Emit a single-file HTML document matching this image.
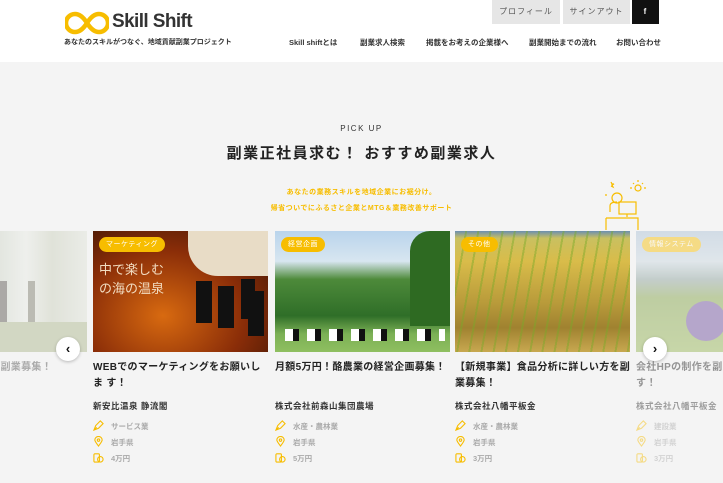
<!DOCTYPE html>
<html><head><meta charset="utf-8"><style>
*{margin:0;padding:0;box-sizing:border-box}
html,body{overflow:hidden}
body{width:723px;height:483px;background:#f4f4f4;font-family:"Liberation Sans","Noto Sans CJK JP",sans-serif;position:relative;color:#222}
.hdr{position:absolute;left:0;top:0;width:723px;height:62px;background:#fff}
.abs{position:absolute;white-space:nowrap}
.btn{position:absolute;top:0;height:24px;background:#e6e6e6;font-size:8px;color:#555;text-align:center;line-height:24px;letter-spacing:1px}
.nav{position:absolute;top:37px;font-size:7.5px;font-weight:bold;color:#333;white-space:nowrap}
.card{position:absolute;top:231px;width:175px;height:250px;overflow:hidden}
.img{height:121px;position:relative;overflow:hidden}
.tag{position:absolute;left:6px;top:6px;height:15px;padding:0 7px;border-radius:8px;background:#f7bd00;color:#fff;font-size:7px;line-height:15px;letter-spacing:.5px}
.t{position:absolute;top:129px;left:0;width:176px;font-size:10px;font-weight:bold;line-height:16px;letter-spacing:.3px;color:#222}
.co{position:absolute;top:169px;font-size:8.5px;font-weight:bold;color:#333;letter-spacing:.5px;white-space:nowrap}
.m{position:absolute;left:18px;font-size:7.5px;color:#aaa;font-weight:bold;white-space:nowrap}
.ic{position:absolute;left:0;width:11px;height:11px}
.fade{opacity:.45}
.arrow{position:absolute;top:337px;width:24px;height:24px;border-radius:12px;background:#fff;box-shadow:0 1px 3px rgba(0,0,0,.25);font-size:13px;line-height:23px;text-align:center;color:#111;font-weight:bold}
</style></head><body>
<div class="hdr"></div>
<svg class="abs" style="left:65px;top:11px" width="44" height="24" viewBox="0 0 44 24"><path d="M22 12C17 4 13 3 10 3a9 9 0 0 0 0 18c3 0 7-1 12-9c5-8 9-9 12-9a9 9 0 0 1 0 18c-3 0-7-1-12-9z" fill="none" stroke="#f7bd00" stroke-width="4.5"/></svg>
<div class="abs" style="left:112px;top:11px;font-size:19px;font-weight:bold;color:#333;letter-spacing:-.6px">Skill Shift</div>
<div class="abs" style="left:64px;top:37px;font-size:7px;color:#333;font-weight:bold">あなたのスキルがつなぐ、地域貢献副業プロジェクト</div>
<div class="btn" style="left:492px;width:68px">プロフィール</div>
<div class="btn" style="left:563px;width:67px">サインアウト</div>
<div class="btn" style="left:632px;width:27px;background:#111;color:#fff;font-weight:bold">f</div>
<div class="nav" style="left:289px">Skill shiftとは</div>
<div class="nav" style="left:360px">副業求人検索</div>
<div class="nav" style="left:426px">掲載をお考えの企業様へ</div>
<div class="nav" style="left:529px">副業開始までの流れ</div>
<div class="nav" style="left:616px">お問い合わせ</div>

<div class="abs" style="left:0;width:723px;top:124px;text-align:center;font-size:8px;letter-spacing:1.5px;color:#333">PICK UP</div>
<div class="abs" style="left:0;width:723px;top:142px;text-align:center;font-size:15px;font-weight:bold;letter-spacing:1.5px;color:#222">副業正社員求む！ おすすめ副業求人</div>
<div class="abs" style="left:0;width:723px;top:185px;text-align:center;font-size:7px;color:#f7bd00;font-weight:bold;letter-spacing:.5px;line-height:16px">あなたの業務スキルを地域企業にお裾分け。<br>帰省ついでにふるさと企業とMTG＆業務改善サポート</div>
<svg class="abs" style="left:600px;top:178px" width="50" height="52" viewBox="0 0 50 52" fill="none" stroke="#f7bd00" stroke-width="1.2"><circle cx="17" cy="20" r="5"/><path d="M10 34v-6c0-3 3-4 7-4"/><rect x="19" y="24" width="17" height="12"/><path d="M27 36v3M6 40h32v12M6 40v12"/><circle cx="38" cy="10" r="3"/><path d="M38 4v-2M44 10h2M32 10h-2M42 6l1-1M34 6l-1-1"/><path d="M11 4l1 2 2 0-2 1 1 2-2-1M5 17h2"/></svg>

<div class="card fade" style="left:0;width:87px">
 <div class="img" style="background:linear-gradient(90deg,#cfd6c8,#e8ebe4 30%,#c9ceb9 60%,#dfe3d8);"><div style="position:absolute;left:0;top:50px;width:70px;height:45px;background:linear-gradient(90deg,#55504a 0 10%,transparent 10% 40%,#776 40% 50%,transparent 50%)"></div><div style="position:absolute;bottom:0;left:0;right:0;height:30px;background:#a9b48a"></div></div>
 <div class="t" style="width:87px;left:0;white-space:nowrap;color:#555"><span style="position:absolute;right:35px">を副業募集！</span></div>
</div>
<div class="card" style="left:93px">
 <div class="img" style="background:radial-gradient(ellipse at 40% 70%,#d86a10,#8a2d08 55%,#3a1505)"><div style="position:absolute;right:0;top:0;width:80px;height:45px;background:#e8dcc6;border-bottom-left-radius:30px"></div><div style="position:absolute;left:103px;top:50px;width:16px;height:42px;background:#111"></div><div style="position:absolute;left:125px;top:55px;width:16px;height:42px;background:#111"></div><div style="position:absolute;left:148px;top:48px;width:14px;height:40px;background:#111"></div><div style="position:absolute;left:155px;top:60px;width:16px;height:45px;background:#111"></div><div style="position:absolute;left:6px;top:28px;color:#f2dcc0;font-size:13px">中で楽しむ<br>の海の温泉</div><span class="tag">マーケティング</span></div>
 <div class="t">WEBでのマーケティングをお願いしま す！</div>
 <div class="co">新安比温泉 静流閣</div>
</div>
<div class="card" style="left:275px">
 <div class="img" style="background:linear-gradient(180deg,#b9d4ec 0,#d8e6f0 25%,#4d8a3a 40%,#2f6e28 70%,#7bb055 85%,#8fbf60)"><div style="position:absolute;right:0;top:0;width:40px;height:95px;background:#2e6a22;border-radius:20px 0 0 0"></div><div style="position:absolute;left:10px;top:98px;width:160px;height:12px;background:repeating-linear-gradient(90deg,#fff 0 8px,#111 8px 14px,transparent 14px 22px)"></div><span class="tag">経営企画</span></div>
 <div class="t">月額5万円！酪農業の経営企画募集！</div>
 <div class="co">株式会社前森山集団農場</div>
</div>
<div class="card" style="left:455px">
 <div class="img" style="background:linear-gradient(180deg,#6c8fb0 0,#c9c060 6%,#d9bc4a 25%,#b89a3a 60%,#a08230 80%,#c8a850)"><div style="position:absolute;inset:0;background:repeating-linear-gradient(100deg,transparent 0 10px,rgba(120,170,40,.45) 10px 12px)"></div><span class="tag">その他</span></div>
 <div class="t">【新規事業】食品分析に詳しい方を副業募集！</div>
 <div class="co">株式会社八幡平板金</div>
</div>
<div class="card fade" style="left:636px;width:87px">
 <div class="img" style="background:linear-gradient(180deg,#a9c0d6,#c8d6e0 25%,#8aa09a 40%,#7ea040 55%,#92b34e)"><div style="position:absolute;left:50px;top:70px;width:40px;height:40px;border-radius:20px;background:#6a4a9a"></div><span class="tag">情報システム</span></div>
 <div class="t" style="white-space:nowrap">会社HPの制作を副業募集します！</div>
 <div class="t" style="top:145px">す！</div>
 <div class="co">株式会社八幡平板金</div>
</div>

<div style="position:absolute;left:93px;top:0">
 <svg class="ic abs" style="top:420px" viewBox="0 0 12 12" fill="none" stroke="#f7bd00" stroke-width="1.2"><path d="M1 11l2-5 5-5 3 3-5 5z M1 11l3-3"/></svg><div class="m" style="top:421px">サービス業</div>
 <svg class="ic abs" style="top:436px" viewBox="0 0 12 12" fill="none" stroke="#f7bd00" stroke-width="1.2"><path d="M6 11C3 7 2 5.5 2 4.5a4 4 0 0 1 8 0c0 1-1 2.5-4 6.5z"/><circle cx="6" cy="4.5" r="1.3"/></svg><div class="m" style="top:437px">岩手県</div>
 <svg class="ic abs" style="top:452px" viewBox="0 0 12 12" fill="none" stroke="#f7bd00" stroke-width="1.2"><rect x="1" y="2" width="6" height="9" rx="1"/><circle cx="8" cy="8" r="3"/></svg><div class="m" style="top:453px">4万円</div>
</div>
<div style="position:absolute;left:275px;top:0">
 <svg class="ic abs" style="top:420px" viewBox="0 0 12 12" fill="none" stroke="#f7bd00" stroke-width="1.2"><path d="M1 11l2-5 5-5 3 3-5 5z M1 11l3-3"/></svg><div class="m" style="top:421px">水産・農林業</div>
 <svg class="ic abs" style="top:436px" viewBox="0 0 12 12" fill="none" stroke="#f7bd00" stroke-width="1.2"><path d="M6 11C3 7 2 5.5 2 4.5a4 4 0 0 1 8 0c0 1-1 2.5-4 6.5z"/><circle cx="6" cy="4.5" r="1.3"/></svg><div class="m" style="top:437px">岩手県</div>
 <svg class="ic abs" style="top:452px" viewBox="0 0 12 12" fill="none" stroke="#f7bd00" stroke-width="1.2"><rect x="1" y="2" width="6" height="9" rx="1"/><circle cx="8" cy="8" r="3"/></svg><div class="m" style="top:453px">5万円</div>
</div>
<div style="position:absolute;left:455px;top:0">
 <svg class="ic abs" style="top:420px" viewBox="0 0 12 12" fill="none" stroke="#f7bd00" stroke-width="1.2"><path d="M1 11l2-5 5-5 3 3-5 5z M1 11l3-3"/></svg><div class="m" style="top:421px">水産・農林業</div>
 <svg class="ic abs" style="top:436px" viewBox="0 0 12 12" fill="none" stroke="#f7bd00" stroke-width="1.2"><path d="M6 11C3 7 2 5.5 2 4.5a4 4 0 0 1 8 0c0 1-1 2.5-4 6.5z"/><circle cx="6" cy="4.5" r="1.3"/></svg><div class="m" style="top:437px">岩手県</div>
 <svg class="ic abs" style="top:452px" viewBox="0 0 12 12" fill="none" stroke="#f7bd00" stroke-width="1.2"><rect x="1" y="2" width="6" height="9" rx="1"/><circle cx="8" cy="8" r="3"/></svg><div class="m" style="top:453px">3万円</div>
</div>
<div style="position:absolute;left:636px;top:0;opacity:.45">
 <svg class="ic abs" style="top:420px" viewBox="0 0 12 12" fill="none" stroke="#f7bd00" stroke-width="1.2"><path d="M1 11l2-5 5-5 3 3-5 5z M1 11l3-3"/></svg><div class="m" style="top:421px">建設業</div>
 <svg class="ic abs" style="top:436px" viewBox="0 0 12 12" fill="none" stroke="#f7bd00" stroke-width="1.2"><path d="M6 11C3 7 2 5.5 2 4.5a4 4 0 0 1 8 0c0 1-1 2.5-4 6.5z"/><circle cx="6" cy="4.5" r="1.3"/></svg><div class="m" style="top:437px">岩手県</div>
 <svg class="ic abs" style="top:452px" viewBox="0 0 12 12" fill="none" stroke="#f7bd00" stroke-width="1.2"><rect x="1" y="2" width="6" height="9" rx="1"/><circle cx="8" cy="8" r="3"/></svg><div class="m" style="top:453px">3万円</div>
</div>

<div class="arrow" style="left:56px">‹</div>
<div class="arrow" style="left:643px">›</div>
</body></html>
